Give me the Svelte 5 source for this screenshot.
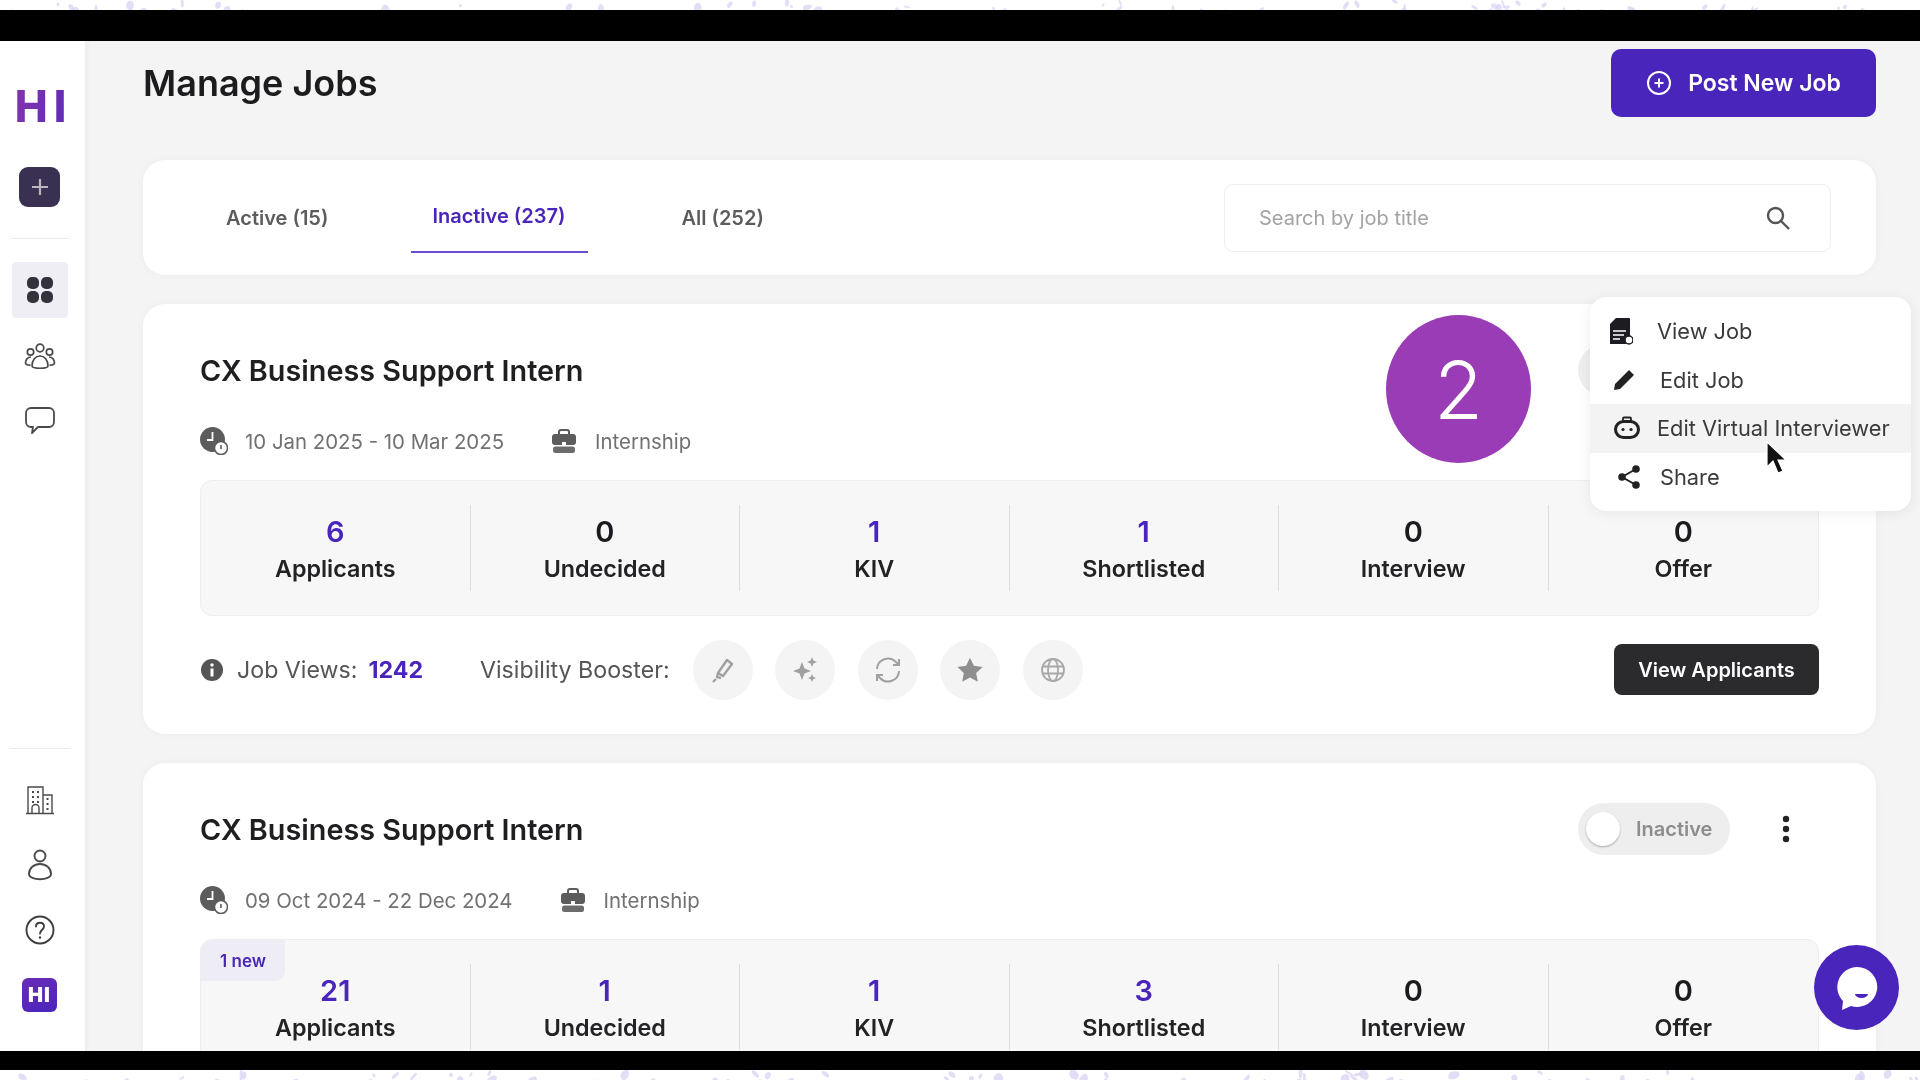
<script>
  function seeded(seed, count) {
    let s = seed;
    const rnd = () => ((s = (s * 16807) % 2147483647) - 1) / 2147483646;
    return Array.from({ length: count }, () => ({
      x: rnd() * 1920,
      y: rnd() * 11,
      w: 2 + rnd() * 9,
      h: 2 + rnd() * 9,
      r: rnd() * 90
    }));
  }
  const topSpecks = seeded(4711, 70);
  const bottomSpecks = seeded(90210, 70);

  const jobs = [
    {
      date: '10 Jan 2025 - 10 Mar 2025',
      tag: null,
      covered: true,
      stats: [
        ['6', 'Applicants'], ['0', 'Undecided'], ['1', 'KIV'],
        ['1', 'Shortlisted'], ['0', 'Interview'], ['0', 'Offer']
      ],
      footer: true
    },
    {
      date: '09 Oct 2024 - 22 Dec 2024',
      tag: '1 new',
      covered: false,
      stats: [
        ['21', 'Applicants'], ['1', 'Undecided'], ['1', 'KIV'],
        ['3', 'Shortlisted'], ['0', 'Interview'], ['0', 'Offer']
      ],
      footer: false
    }
  ];
</script>

{#snippet specks(list)}
  {#each list as p}
    <i class="speck" style="left:{p.x}px;top:{p.y}px;width:{p.w}px;height:{p.h}px;transform:rotate({p.r}deg)"></i>
  {/each}
{/snippet}

<div class="screen">
  <div class="strip">{@render specks(topSpecks)}</div>
  <div class="bar top"></div>

  <div class="app">
    <aside class="side">
      <div class="logo">HI</div>
      <div class="add">
        <svg width="22" height="22" viewBox="0 0 22 22"><path d="M11 3v16M3 11h16" stroke="#b9b6c2" stroke-width="2.2" /></svg>
      </div>
      <div class="rule first"></div>
      <div class="nav active">
        <svg width="28" height="28" viewBox="0 0 28 28" fill="#33323d">
          <rect x="1" y="1" width="12" height="12" rx="5" /><rect x="15" y="1" width="12" height="12" rx="5" />
          <rect x="1" y="15" width="12" height="12" rx="5" /><rect x="15" y="15" width="12" height="12" rx="5" />
        </svg>
      </div>
      <div class="nav">
        <svg width="32" height="30" viewBox="0 0 32 30" fill="none" stroke="#4a4a4a" stroke-width="1.7">
          <circle cx="16" cy="6" r="3.8" /><circle cx="6.5" cy="10" r="3.2" /><circle cx="25.5" cy="10" r="3.2" />
          <path d="M8 24c0-6 3.500-10 8-10s8 4 8 10c0 3-16 3-16 0z" />
          <path d="M7 15c-3 0-5.500 2.500-5.500 6 0 1.500 2.500 2.200 5 2.200M25 15c3 0 5.500 2.500 5.500 6 0 1.500-2.500 2.200-5 2.200" />
        </svg>
      </div>
      <div class="nav">
        <svg width="32" height="30" viewBox="0 0 32 30" fill="none" stroke="#4a4a4a" stroke-width="1.8" stroke-linejoin="round">
          <path d="M7 2h18a5 5 0 0 1 5 5v9a5 5 0 0 1-5 5H14l-6 6 1-6H7a5 5 0 0 1-5-5V7a5 5 0 0 1 5-5z" />
        </svg>
      </div>

      <div class="grow"></div>
      <div class="rule"></div>

      <div class="nav low">
        <svg width="30" height="30" viewBox="0 0 30 30" fill="none" stroke="#4a4a4a" stroke-width="1.4">
          <path d="M3 28V2h15v26M18 10h9v18M1 28.500h28" />
          <path d="M7 7h2M12 7h2M7 12h2M12 12h2M7 17h2M12 17h2M21.500 14h2M21.500 19h2M21.500 24h2" stroke-width="2" />
          <path d="M7 28v-5a3.500 3.500 0 0 1 7 0v5" />
        </svg>
      </div>
      <div class="nav low">
        <svg width="28" height="32" viewBox="0 0 28 32" fill="none" stroke="#4a4a4a" stroke-width="1.900">
          <circle cx="14" cy="7" r="5.500" />
          <path d="M3 25c0-6 5-10 11-10s11 4 11 10c0 7-22 7-22 0z" />
        </svg>
      </div>
      <div class="nav low">
        <svg width="30" height="30" viewBox="0 0 30 30" fill="none" stroke="#3e3e3e" stroke-width="1.900">
          <circle cx="15" cy="15" r="13.500" />
          <path d="M11 11.500c0-5 8-5 8 0 0 3-4 3.500-4 7" stroke-linecap="round" />
          <circle cx="15" cy="22.500" r="1.200" fill="#3e3e3e" stroke="none" />
        </svg>
      </div>
      <div class="badge">HI</div>
    </aside>

    <main class="main">
      <header class="head">
        <h1>Manage Jobs</h1>
        <button class="post">
          <svg width="26" height="26" viewBox="0 0 26 26" fill="none" stroke="#fff" stroke-width="2">
            <circle cx="13" cy="13" r="11" /><path d="M13 8.500v9M8.500 13h9" />
          </svg>
          Post New Job
        </button>
      </header>

      <section class="tabs card">
        <div class="tablist">
          <div class="tab t1">Active (15)</div>
          <div class="tab t2 on">Inactive (237)</div>
          <div class="tab t3">All (252)</div>
        </div>
        <div class="search">
          <span>Search by job title</span>
          <svg width="28" height="28" viewBox="0 0 28 28" fill="none" stroke="#555" stroke-width="2.400">
            <circle cx="11.500" cy="11.500" r="7.500" /><path d="M17 17l8 8" />
          </svg>
        </div>
      </section>

      {#each jobs as job}
        <section class="job card">
          <div class="jobhead">
            <h2>CX Business Support Intern</h2>
            <div class="controls">
              <div class="toggle">
                {#if !job.covered}<i></i><span>Inactive</span>{/if}
              </div>
              <svg class="kebab" width="8" height="30" viewBox="0 0 8 30" fill="#222">
                <circle cx="4" cy="5" r="3.200" /><circle cx="4" cy="15" r="3.200" /><circle cx="4" cy="25" r="3.200" />
              </svg>
            </div>
          </div>

          <div class="meta">
            <svg width="28" height="28" viewBox="0 0 28 28">
              <circle cx="12.500" cy="12.500" r="12.500" fill="#5c5c5c" />
              <path d="M12.500 5v8H7" fill="none" stroke="#fff" stroke-width="1.800" />
              <circle cx="21" cy="21" r="6.500" fill="#fff" stroke="#5c5c5c" stroke-width="1.500" />
              <path d="M21 18v4" stroke="#5c5c5c" stroke-width="1.600" />
            </svg>
            <span class="date">{job.date}</span>
            <svg class="bag" width="26" height="26" viewBox="0 0 26 26">
              <path d="M8 7V4a2 2 0 0 1 2-2h6a2 2 0 0 1 2 2v3" fill="none" stroke="#5c5c5c" stroke-width="2" />
              <rect x="1" y="6" width="24" height="11" rx="3" fill="#5c5c5c" />
              <rect x="2" y="18.500" width="22" height="6.500" rx="2.500" fill="#6c6c6c" />
              <rect x="11" y="14" width="4" height="4" fill="#fff" />
            </svg>
            <span class="kind">Internship</span>
          </div>

          <div class="stats">
            {#if job.tag}<div class="newtag">{job.tag}</div>{/if}
            {#each job.stats as [num, label]}
              <div class="stat">
                <b class:hot={num !== '0'}>{num}</b>
                <span>{label}</span>
              </div>
            {/each}
          </div>

          {#if job.footer}
            <div class="foot">
              <svg width="24" height="24" viewBox="0 0 24 24">
                <circle cx="12" cy="12" r="11" fill="#555" />
                <circle cx="12" cy="7" r="1.700" fill="#fff" />
                <rect x="10.500" y="10.500" width="3" height="8" fill="#fff" />
              </svg>
              <span class="views">Job Views:</span>
              <b class="count">1242</b>
              <span class="boost">Visibility Booster:</span>
              <div class="circles">
                <div class="circle">
                  <svg width="26" height="26" viewBox="0 0 26 26" fill="none" stroke="#a0a0a0" stroke-width="2.400">
                    <path d="M17 3l5 4-9 12-5-3zM8 16l-1 4 4 1M6 22l-3 3" stroke-linejoin="round" />
                  </svg>
                </div>
                <div class="circle">
                  <svg width="28" height="28" viewBox="0 0 28 28" fill="#a0a0a0">
                    <path d="M11 6l2.500 6.500L20 15l-6.500 2.500L11 24l-2.500-6.500L2 15l6.500-2.500zM21 1l1.400 3.600L26 6l-3.600 1.400L21 11l-1.400-3.600L16 6l3.600-1.400zM21 18l1.200 2.800L25 22l-2.800 1.200L21 26l-1.200-2.800L17 22l2.800-1.200z" />
                  </svg>
                </div>
                <div class="circle">
                  <svg width="28" height="28" viewBox="0 0 28 28" fill="none" stroke="#a0a0a0" stroke-width="2">
                    <path d="M3 13a11 11 0 0 1 19-7l3 3M25 15a11 11 0 0 1-19 7l-3-3" />
                    <path d="M25 3v6h-6M3 25v-6h6" />
                  </svg>
                </div>
                <div class="circle">
                  <svg width="28" height="28" viewBox="0 0 24 24" fill="#8f8f8f">
                    <path d="M12 1.500l3.300 6.900 7.500 1-5.500 5.200 1.400 7.500L12 18.400l-6.700 3.700 1.400-7.500L1.200 9.400l7.500-1z" />
                  </svg>
                </div>
                <div class="circle">
                  <svg width="26" height="26" viewBox="0 0 26 26" fill="none" stroke="#a8a8a8" stroke-width="1.800">
                    <circle cx="13" cy="13" r="11" /><ellipse cx="13" cy="13" rx="5" ry="11" /><path d="M2.500 9.500h21M2.500 16.500h21" />
                  </svg>
                </div>
              </div>
              <button class="applicants">View Applicants</button>
            </div>
          {/if}
        </section>
      {/each}

      <button class="chat" aria-label="Chat">
        <svg width="44" height="46" viewBox="0 0 44 46">
          <path d="M22 2a20 20 0 1 1-6 39L7 45l1-9A20 20 0 0 1 22 2z" fill="#fff" />
          <path d="M20 29h13a6.500 4 0 0 1-13 0z" fill="#4a25bb" />
        </svg>
      </button>
    </main>

    <div class="menu">
      <div class="item">
        <svg class="i1" width="24" height="28" viewBox="0 0 24 28">
          <path d="M7 1h13a1 1 0 0 1 1 1v25H1V7z" fill="#1c1c22" />
          <path d="M4 14h13M4 18h11M4 22h7" stroke="#fff" stroke-width="1.500" />
          <circle cx="20" cy="23" r="4" fill="#fff" stroke="#1c1c22" stroke-width="1.500" />
        </svg>
        <span class="l1">View Job</span>
      </div>
      <div class="item">
        <svg class="i2" width="24" height="24" viewBox="0 0 24 24" fill="#222">
          <path d="M17 2l5 5L8 21l-6 1 1-6zM15.500 5.500l3 3" />
        </svg>
        <span class="l2">Edit Job</span>
      </div>
      <div class="item hover">
        <svg class="i3" width="26" height="24" viewBox="0 0 26 24">
          <rect x="1.500" y="5.500" width="23" height="16" rx="8" fill="none" stroke="#222" stroke-width="3" />
          <path d="M9 6V2.500a1 1 0 0 1 1-1h6a1 1 0 0 1 1 1V6z" fill="none" stroke="#222" stroke-width="1.800" />
          <circle cx="9" cy="13.500" r="1.600" fill="#222" /><circle cx="17" cy="13.500" r="1.600" fill="#222" />
        </svg>
        <span class="l1">Edit Virtual Interviewer</span>
      </div>
      <div class="item">
        <svg class="i4" width="24" height="26" viewBox="0 0 24 26" fill="none" stroke="#222" stroke-width="2">
          <path d="M19 5L5 13l14 8" />
          <circle cx="19" cy="5" r="2.800" fill="#222" /><circle cx="5" cy="13" r="2.800" fill="#222" /><circle cx="19" cy="21" r="2.800" fill="#222" />
        </svg>
        <span class="l2">Share</span>
      </div>
    </div>

    <div class="step">2</div>

    <svg class="pointer" width="24" height="36" viewBox="0 0 24 36">
      <path d="M2 1l0 25 6-6 5 12 5-2-5-11h8z" fill="#111" stroke="#fff" stroke-width="1.200" />
    </svg>
  </div>

  <div class="bar bottom"></div>
  <div class="strip">{@render specks(bottomSpecks)}</div>
</div>

<style>
  :global(body) {
    margin: 0;
    background: #fff;
    font-family: Inter, "Liberation Sans", sans-serif;
    overflow: hidden;
  }
  .screen { width: 1920px; height: 1080px; display: flex; flex-direction: column; overflow: hidden; }
  .strip { height: 10px; flex: none; position: relative; overflow: hidden; background: #fff; }
  .speck { position: absolute; background: #d9d2f3; border-radius: 40% 70% 30% 60%; opacity: .75; }
  .bar { flex: none; background: #000; }
  .bar.top { height: 31px; }
  .bar.bottom { height: 19px; }

  .app { flex: none; height: 1010px; display: flex; position: relative; overflow: hidden; background: #f4f4f4; filter: blur(.45px); }

  .side {
    width: 85px; flex: none; background: #fff; display: flex; flex-direction: column; align-items: center;
    box-shadow: 1px 0 6px rgba(0,0,0,.05); padding: 45px 6px 0 0; box-sizing: border-box; z-index: 1;
  }
  .logo {
    font-size: 44px; font-weight: 800; line-height: 40px; letter-spacing: 6px; margin-right: -8px;
    background: linear-gradient(100deg, #8433ab, #5d2cb8); -webkit-background-clip: text; background-clip: text; color: transparent;
  }
  .add {
    margin-top: 41px; width: 41px; height: 40px; border-radius: 9px; background: #3a3052;
    display: flex; align-items: center; justify-content: center; flex: none;
  }
  .rule { width: 60px; height: 1px; background: #ececec; flex: none; }
  .rule.first { margin-top: 31px; margin-bottom: 23px; }
  .nav { width: 56px; height: 56px; flex: none; display: flex; align-items: center; justify-content: center; margin-bottom: 8px; border-radius: 4px; }
  .nav.active { background: #efeef5; margin-bottom: 11px; }
  .nav.low { height: 50px; margin-bottom: 15px; }
  .grow { flex: 1; }
  .side > .rule:not(.first) { margin-bottom: 26px; }
  .badge {
    width: 35px; height: 34px; border-radius: 6px; flex: none; margin-bottom: 39px; margin-top: 8px;
    background: linear-gradient(160deg, #6a2cb8, #4a25bb); color: #fff; font-size: 20px; font-weight: 900; letter-spacing: 1px;
    display: flex; align-items: center; justify-content: center;
  }

  .main { flex: 1; padding: 8px 44px 0 58px; position: relative; min-width: 0; }
  .head { display: flex; justify-content: space-between; align-items: center; height: 68px; margin-bottom: 43px; }
  h1 { margin: 0; font-size: 36px; font-weight: 600; color: #1c1c1f; }
  .post {
    width: 265px; height: 68px; background: #4a25bb; border: 0; border-radius: 10px; color: #fff;
    font: 600 23px Inter, sans-serif; display: flex; align-items: center; justify-content: center; gap: 16px;
  }

  .card { background: #fff; border-radius: 22px; box-shadow: 0 0 8px rgba(0,0,0,.04); }
  .tabs { height: 115px; display: flex; align-items: flex-start; justify-content: space-between; padding: 24px 45px 0 0; box-sizing: border-box; margin-bottom: 29px; }
  .tablist { display: flex; height: 93px; margin-top: -24px; }
  .tab { font-size: 20px; font-weight: 600; color: #5c5c5c; display: flex; align-items: center; height: 93px; padding-top: 22px; box-sizing: border-box; }
  .t1 { margin-left: 83px; }
  .t2 { margin-left: 83px; padding: 21px 21px 0; color: #4a25bb; border-bottom: 2px solid #6a50cc; width: 177px; box-sizing: border-box; }
  .t3 { margin-left: 93px; }
  .search {
    width: 607px; height: 68px; box-sizing: border-box; border: 1.500px solid #eee; border-radius: 9px;
    display: flex; align-items: center; justify-content: space-between; padding: 0 38px 1px 34px;
    font-size: 20px; color: #a3a3a3;
  }

  .job { padding: 40px 57px 39px; margin-bottom: 29px; }
  .jobhead { display: flex; align-items: center; justify-content: space-between; height: 52px; }
  h2 { margin: 0; font-size: 28.800px; font-weight: 600; color: #1f1f22; }
  .controls { display: flex; align-items: center; }
  .toggle {
    width: 152px; height: 52px; border-radius: 26px; background: #eee; display: flex; align-items: center;
    box-sizing: border-box; padding-left: 8px; color: #8d8d8d; font-size: 20px; font-weight: 600;
  }
  .toggle i { width: 34px; height: 34px; border-radius: 50%; background: #fff; box-shadow: 0 1px 2px rgba(0,0,0,.3); margin-right: 16px; }
  .kebab { margin: 0 29px 0 52px; }
  .meta { display: flex; align-items: center; height: 28px; margin-top: 31px; font-size: 20.400px; color: #717171; }
  .date { margin-left: 17px; }
  .bag { margin-left: 47px; }
  .kind { margin-left: 18px; }

  .stats {
    margin-top: 25px; height: 136px; box-sizing: border-box; background: #f7f7f7; border: 1px solid #eee; border-radius: 12px;
    display: grid; grid-template-columns: repeat(6, 1fr); padding: 24px 0; position: relative;
  }
  .stat { display: flex; flex-direction: column; align-items: center; justify-content: center; padding-top: 3px; border-right: 1.500px solid #ddd; }
  .stat:last-child { border-right: 0; }
  .stat b { font-size: 29px; font-weight: 600; line-height: 37px; color: #1b1b1f; }
  .stat b.hot { color: #4a25bb; }
  .stat span { font-size: 23.300px; font-weight: 600; line-height: 37px; color: #232326; }
  .newtag {
    position: absolute; left: 0; top: 0; width: 84px; height: 41px; background: #eeedf5; border-radius: 12px 0 10px 0;
    display: flex; align-items: center; justify-content: center; color: #4a25bb; font-size: 17px; font-weight: 600;
  }

  .foot { display: flex; align-items: center; height: 51px; margin-top: 28px; font-size: 23.200px; color: #555; }
  .views { margin-left: 13px; }
  .count { margin-left: 11px; font-weight: 700; color: #4a25bb; }
  .boost { margin-left: 57px; }
  .circles { display: flex; gap: 22.500px; margin-left: 23px; }
  .circle { width: 60px; height: 60px; border-radius: 50%; background: #f4f4f4; display: flex; align-items: center; justify-content: center; }
  .applicants {
    margin-left: auto; width: 205px; height: 51px; border: 0; border-radius: 8px; background: #2b2b2e; color: #fff;
    font: 600 20px Inter, sans-serif;
  }

  .chat {
    position: absolute; left: 1729px; top: 904px; width: 85px; height: 85px; border-radius: 50%; border: 0; background: #4a25bb;
    display: flex; align-items: center; justify-content: center; padding: 0;
  }

  .menu {
    position: absolute; left: 1590px; top: 256px; width: 321px; height: 214px; padding-top: 10px; box-sizing: border-box;
    background: #fff; border-radius: 16px; box-shadow: 0 2px 14px rgba(0,0,0,.07);
  }
  .item { height: 48.500px; display: flex; align-items: center; position: relative; font-size: 21.800px; color: #3a3a3d; }
  .item.hover { background: #f3f3f3; }
  .item svg { position: absolute; }
  .i1 { left: 19px; } .i2 { left: 22px; } .i3 { left: 24px; } .i4 { left: 27px; }
  .item span { position: absolute; white-space: nowrap; }
  .l1 { left: 67px; }
  .l2 { left: 70px; }

  .step {
    position: absolute; left: 1386px; top: 274px; width: 145px; height: 148px; border-radius: 50%; background: #9a3cb6;
    color: #fff; font-size: 80px; font-weight: 300; display: flex; align-items: center; justify-content: center;
  }
  .pointer { position: absolute; left: 1765px; top: 400px; }
</style>
